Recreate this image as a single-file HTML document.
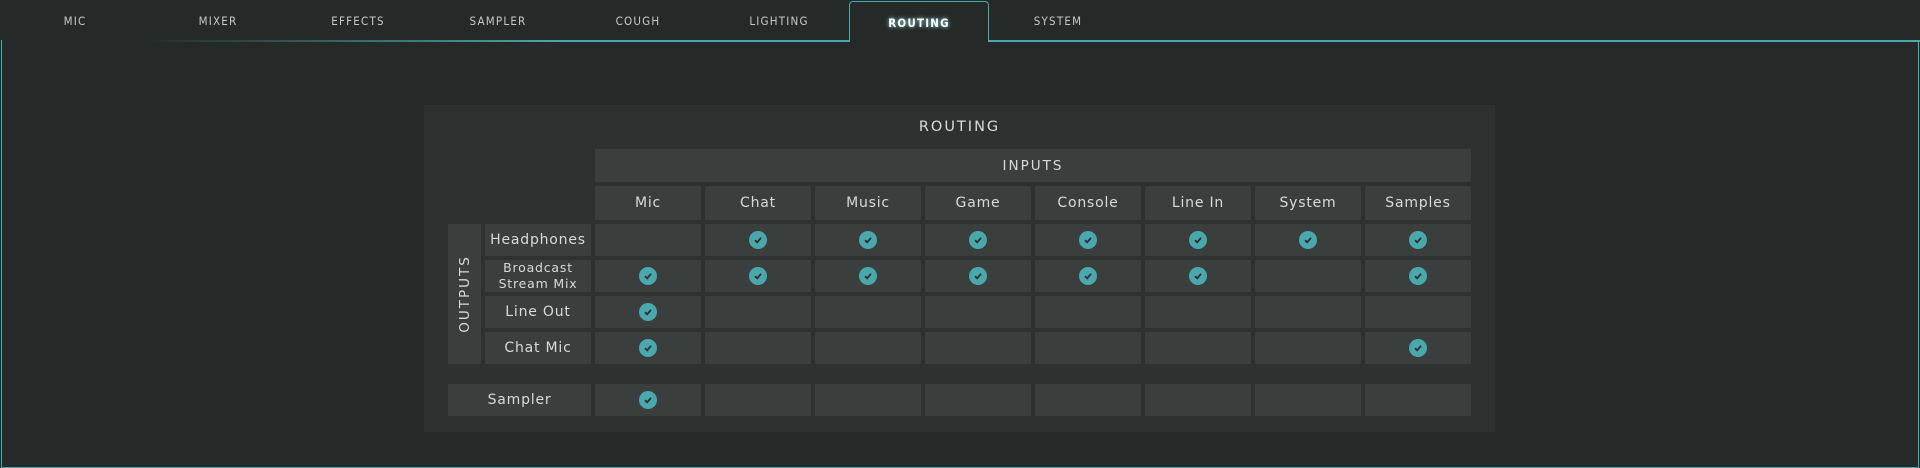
<!DOCTYPE html>
<html><head><style>
*{margin:0;padding:0;box-sizing:border-box}
body{width:1920px;height:468px;background:#252928;position:relative;overflow:hidden;font-family:"DejaVu Sans","Liberation Sans",sans-serif;color:#d8dcdb}
.tabs{position:absolute;top:0;left:0;width:1920px;height:41px;background:#252928}
.tab{position:absolute;top:0;width:140px;height:40px;line-height:42px;text-align:center;font-size:11.5px;letter-spacing:1.2px;color:#c5c9c8;font-family:"DejaVu Sans Condensed","DejaVu Sans",sans-serif}
.tab.act{top:1px;border:1.5px solid #4aa8ac;border-bottom:none;border-radius:4px 4px 0 0;background:#252928;color:#fff;font-weight:bold;text-shadow:0 0 4px #9ee;height:40px}
.line{position:absolute;top:40px;height:1.5px}
.frame{position:absolute;left:1px;top:40px;width:1918px;height:428px;border:1.5px solid #4aa8ac;border-top:none}
.c{position:absolute;background:#3a3f3d;display:flex;align-items:center;justify-content:center;font-size:14px;letter-spacing:.8px;color:#d6dad9}
.title{position:absolute;left:424px;width:1071px;top:119px;text-align:center;font-size:14.5px;letter-spacing:2px}
.ck{width:18px;height:18px;border-radius:50%;background:#4aa8ac;display:flex;align-items:center;justify-content:center}
</style></head><body>
<div class="tabs">
<div class="tab" style="left:5px">MIC</div>
<div class="tab" style="left:148px">MIXER</div>
<div class="tab" style="left:288px">EFFECTS</div>
<div class="tab" style="left:428px">SAMPLER</div>
<div class="tab" style="left:568px">COUGH</div>
<div class="tab" style="left:709px">LIGHTING</div>
<div class="tab act" style="left:849px">ROUTING</div>
<div class="tab" style="left:988px">SYSTEM</div>
</div>
<div class="line" style="left:140px;width:710px;background:linear-gradient(90deg,rgba(74,168,172,0),#4aa8ac 60%)"></div>
<div class="line" style="left:988px;width:932px;background:#4aa8ac"></div>
<div class="frame"></div>
<div style="position:absolute;left:424px;right:425px;top:105px;bottom:36px;background:#2d3130"></div>
<div class="title">ROUTING</div>
<div id="g"></div>
<script>
var g=document.getElementById('g'),h='';
function c(x,y,w,hh,t,s){h+='<div class="c" style="left:'+x+'px;top:'+y+'px;width:'+w+'px;height:'+hh+'px;'+(s||'')+'">'+(t||'')+'</div>';}
var ck='<div class="ck"><svg width="10" height="10" viewBox="0 0 10 10"><path d="M2 5.2L4.2 7.3L8 2.8" fill="none" stroke="#2b2f2e" stroke-width="1.8"/></svg></div>';
c(595,149,876,33,'INPUTS','letter-spacing:2px;font-size:13.5px');
var cols=['Mic','Chat','Music','Game','Console','Line In','System','Samples'];
for(var i=0;i<8;i++)c(595+i*110,186,106,34,cols[i]);
c(448,224,33,140,'<div style="transform:rotate(-90deg);white-space:nowrap;letter-spacing:2px;font-size:13.5px">OUTPUTS</div>');
var rows=['Headphones','<div style="text-align:center;font-size:12.5px;line-height:16px">Broadcast<br>Stream Mix</div>','Line Out','Chat Mic'];
var m=[[0,1,1,1,1,1,1,1],[1,1,1,1,1,1,0,1],[1,0,0,0,0,0,0,0],[1,0,0,0,0,0,0,1]];
for(var r=0;r<4;r++){var y=224+r*36;c(485,y,106,32,rows[r]);for(var i=0;i<8;i++)c(595+i*110,y,106,32,m[r][i]?ck:'');}
c(448,384,143,32,'Sampler');
for(var i=0;i<8;i++)c(595+i*110,384,106,32,i==0?ck:'');
g.innerHTML=h;
</script>
</body></html>
